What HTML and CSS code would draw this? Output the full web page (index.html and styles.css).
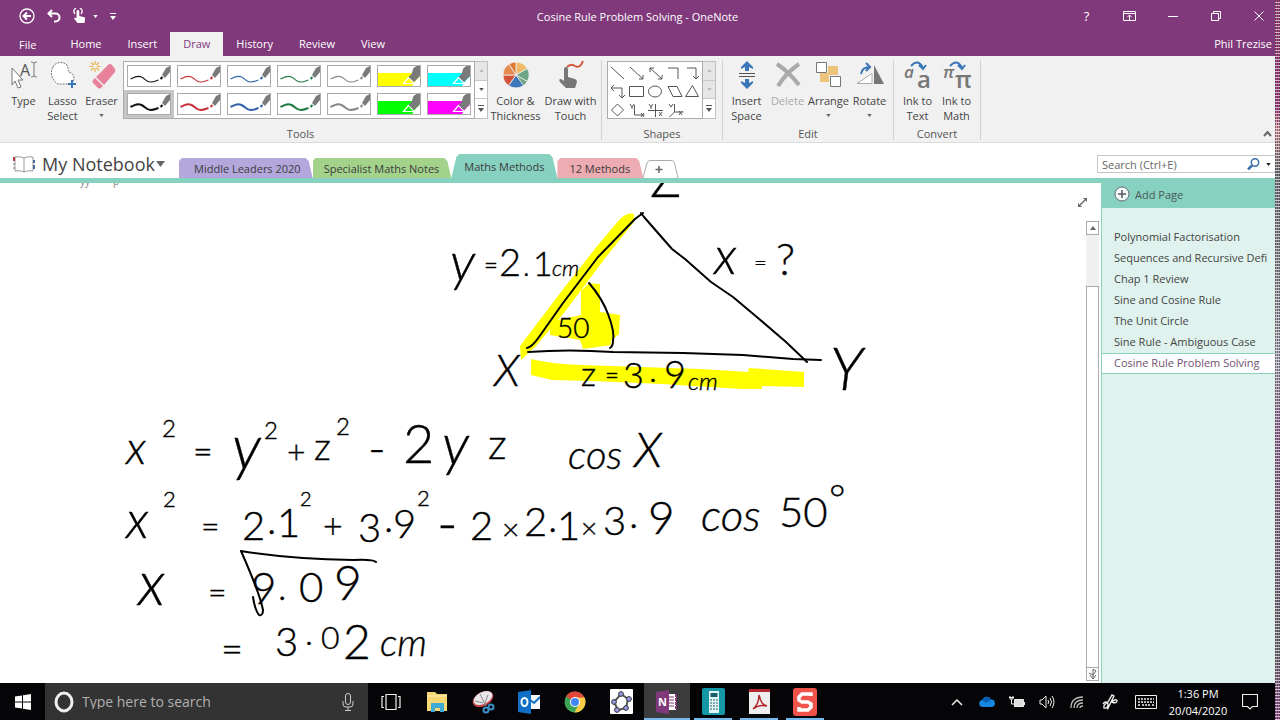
FILE: index.html
```html
<!DOCTYPE html>
<html lang="en">
<head>
<meta charset="utf-8">
<title>Cosine Rule Problem Solving - OneNote</title>
<link rel="stylesheet" href="styles.css">
</head>
<body>
<svg class="defs" aria-hidden="true">
  <symbol id="pen-thin" viewBox="0 0 42 20"><path d="M2.500 13c4-2 7-4 11-2s5 5 9 5 5-1 8-2" fill="none" stroke="currentColor" stroke-width="1.100"/><path d="M34 9l4-7 4-2v6l-5 6z" fill="#7a7a7a"/><path d="M32.500 13l2-2" stroke="currentColor" stroke-width="2"/></symbol>
  <symbol id="pen-thick" viewBox="0 0 42 20"><path d="M2.500 13c4-2 7-4 11-2s5 5 9 5 5-1 8-2" fill="none" stroke="currentColor" stroke-width="2"/><path d="M34 9l4-7 4-2v6l-5 6z" fill="#7a7a7a"/><path d="M32.500 13l2-2" stroke="currentColor" stroke-width="2"/></symbol>
  <symbol id="marker" viewBox="0 0 42 20"><path d="M0 7h36l6 4v9H0z" fill="currentColor"/><path d="M42 11v9h-8l5-7z" fill="#fff"/><path d="M25.500 17.500l5-6 6 6z" fill="none" stroke="#fff" stroke-width="1.200"/><path d="M30.500 11l3-3 2-6 3-2H42v10l-6 6z" fill="#7a7a7a"/></symbol>
  <symbol id="caret" viewBox="0 0 6 4"><path d="M0 0h6L3 4z" fill="currentColor"/></symbol>
  <symbol id="caret-up" viewBox="0 0 6 4"><path d="M0 4h6L3 0z" fill="currentColor"/></symbol>
  <symbol id="more" viewBox="0 0 6 7"><path d="M0 0h6v1H0zM0 3h6L3 7z" fill="currentColor"/></symbol>
</svg>
<div class="screen">
<div class="desktop">
  <header class="top">
    <div class="titlebar">
      <div class="quick">
        <button aria-label="Back"><svg width="16" height="16" viewBox="0 0 16 16" fill="none" stroke="currentColor"><circle cx="8" cy="8" r="7" stroke-width="1.300"/><path d="M12 8H5M8 4.500L4.500 8 8 11.500" stroke-width="2"/></svg></button>
        <button aria-label="Undo"><svg width="14" height="14" viewBox="0 0 14 14" fill="none" stroke="currentColor" stroke-width="2"><path d="M5 1L1.500 4.500 5 8M2 4.500h6.500a4 4 0 0 1 0 8H7"/></svg></button>
        <button aria-label="Touch mode" class="touch"><svg width="14" height="16" viewBox="0 0 14 16"><path d="M2 6a4 4 0 1 1 6 0" fill="none" stroke="currentColor" stroke-width="1.300"/><path d="M3.500 3.500a1.400 1.400 0 0 1 2.800 0V8l5 1.200q1 .4.800 1.500L11.500 15h-7L1 10.500l1-1 1.500 1z" fill="currentColor"/></svg><svg width="5" height="3"><use href="#caret"/></svg></button>
        <button aria-label="Customize toolbar"><svg width="6" height="7"><use href="#more"/></svg></button>
      </div>
      <h1>Cosine Rule Problem Solving - OneNote</h1>
      <div class="window-buttons">
        <button aria-label="Help" class="help">?</button>
        <button aria-label="Ribbon display"><svg width="13" height="10" viewBox="0 0 13 10" fill="none" stroke="currentColor"><path d="M.5.500h12v9H.5zM.5 2.500h12M6.500 9V4M4.500 6l2-2 2 2"/></svg></button>
        <button aria-label="Minimize"><svg width="10" height="10" viewBox="0 0 10 10" stroke="currentColor"><path d="M0 5.500h10"/></svg></button>
        <button aria-label="Restore"><svg width="10" height="10" viewBox="0 0 10 10" fill="none" stroke="currentColor"><path d="M.5 2.500h7v7h-7zM2.500 2.500v-2h7v7h-2"/></svg></button>
        <button aria-label="Close"><svg width="10" height="10" viewBox="0 0 10 10" stroke="currentColor"><path d="M.5.500l9 9M9.500.500l-9 9"/></svg></button>
      </div>
    </div>
    <nav class="menu">
      <button class="file">File</button><button>Home</button><button>Insert</button><button class="current">Draw</button><button>History</button><button>Review</button><button>View</button>
      <span class="user">Phil Trezise</span>
    </nav>
  </header>

  <section class="ribbon" aria-label="Draw">
    <div class="group tools">
      <div class="group-body">
        <button class="tool"><svg width="28" height="30" viewBox="0 0 28 30"><text x="10" y="16" class="type-letter">A</text><path d="M21 2q2 0 3 1 1-1 3-1M24 3v13M21 17q2 0 3-1 1 1 3 1" fill="none" stroke="#777"/><path d="M2 8l11 12H8l3 7-3 1-3-7-3 4z" fill="#fff" stroke="#777"/></svg><span>Type</span></button>
        <button class="tool"><svg width="28" height="30" viewBox="0 0 28 30"><path d="M4 7c2-5 10-6 14-2 2 4 0 7 4 8 5 3 3 9 0 11H9C4 21 0 14 4 7z" fill="#fff" stroke="#777" stroke-dasharray="2 1"/><path d="M23 20v8M19 24h8" stroke="#3a76b8" stroke-width="2"/></svg><span>Lasso<br>Select</span></button>
        <button class="tool"><svg width="28" height="30" viewBox="0 0 28 30"><path d="M7 1v11M1.500 6.500h11M3 2.500l8 8M11 2.500l-8 8" stroke="#eeb14a" stroke-width="1.200"/><circle cx="7" cy="6.500" r="2" fill="#f1f1f1"/><path d="M20 5q2-2 4 0l3 4q1 2 0 3L16 25l-8-8z" fill="#e8819a"/><path d="M7 18l8 8-2 2q-2 1-3 0l-5-5q-1-2 0-3z" fill="#e8819a"/></svg><span>Eraser</span><svg class="drop" width="5" height="3"><use href="#caret"/></svg></button>
        <div class="gallery pens">
          <button class="swatch black" aria-label="Black thin pen"><svg><use href="#pen-thin"/></svg></button>
          <button class="swatch red" aria-label="Red thin pen"><svg><use href="#pen-thin"/></svg></button>
          <button class="swatch blue" aria-label="Blue thin pen"><svg><use href="#pen-thin"/></svg></button>
          <button class="swatch green" aria-label="Green thin pen"><svg><use href="#pen-thin"/></svg></button>
          <button class="swatch gray" aria-label="Gray thin pen"><svg><use href="#pen-thin"/></svg></button>
          <button class="swatch yellow" aria-label="Yellow highlighter"><svg><use href="#marker"/></svg></button>
          <button class="swatch cyan" aria-label="Cyan highlighter"><svg><use href="#marker"/></svg></button>
          <button class="swatch black chosen" aria-label="Black pen"><svg><use href="#pen-thick"/></svg></button>
          <button class="swatch red" aria-label="Red pen"><svg><use href="#pen-thick"/></svg></button>
          <button class="swatch blue" aria-label="Blue pen"><svg><use href="#pen-thick"/></svg></button>
          <button class="swatch green" aria-label="Green pen"><svg><use href="#pen-thick"/></svg></button>
          <button class="swatch gray" aria-label="Gray pen"><svg><use href="#pen-thick"/></svg></button>
          <button class="swatch lime" aria-label="Green highlighter"><svg><use href="#marker"/></svg></button>
          <button class="swatch magenta" aria-label="Magenta highlighter"><svg><use href="#marker"/></svg></button>
        </div>
        <div class="gallery-scroll">
          <button aria-label="Previous pens" disabled><svg width="5" height="3"><use href="#caret-up"/></svg></button>
          <button aria-label="Next pens"><svg width="5" height="3"><use href="#caret"/></svg></button>
          <button aria-label="More pens"><svg width="6" height="7"><use href="#more"/></svg></button>
        </div>
        <button class="tool wide"><svg width="28" height="30" viewBox="-14 -15 28 30" stroke="#f1f1f1" stroke-width=".8"><path d="M0 0V-13A13 13 0 0 1 11.300-6.500z" fill="#f0bb68"/><path d="M0 0l11.300-6.500A13 13 0 0 1 11.300 6.500z" fill="#6fa486"/><path d="M0 0l11.300 6.500A13 13 0 0 1 6.500 11.300z" fill="#6fa486"/><path d="M0 0l7.500 10.600A13 13 0 0 1-7.500 10.600z" fill="#3f77ba"/><path d="M0 0l-7.500 10.600A13 13 0 0 1-13 0z" fill="#d5523a"/><path d="M0 0h-13A13 13 0 0 1-7-11z" fill="#e58a4e"/><path d="M0 0l-7-11A13 13 0 0 1 0-13z" fill="#df7b35"/></svg><span>Color &amp;<br>Thickness</span></button>
        <button class="tool wide"><svg width="28" height="30" viewBox="0 0 28 30"><path d="M10 7q4-4 8-1 5 3 8-5" fill="none" stroke="#d5523a" stroke-width="2"/><path d="M7 9q0-2 2-2t2 2v8l7 2q2 1 2 3l-2 6H9l-6-6q-2-3 1-3l3 2z" fill="#777"/></svg><span>Draw with<br>Touch</span></button>
      </div>
      <h2>Tools</h2>
    </div>
    <div class="group shapes">
      <div class="group-body">
        <button class="gallery shape-grid" aria-label="Shapes"><svg width="94" height="55" viewBox="0 0 94 55" fill="none" stroke="#555"><path d="M3 4l13 12M22 4l13 12M31 16h4v-4M42 5l12 11M42 9V5h4M50 16h4v-4M60 5h10v11M79 5h9v11M85 13l3 3 3-3"/><path d="M3 25h11v10M6 22l-3 3 3 3M11 32l3 3 3-3M21.500 23.500h14v10h-14zM60 23.500h9l5 10h-9zM84.500 22.500l6 11h-13z"/><ellipse cx="47" cy="28.500" rx="6.500" ry="5.500"/><path d="M9.500 41l6 6-6 6-6-6zM26.500 42v10h10M40 47.500h15M47.500 41v13M66.500 41v8h9M66.500 49l-5 5"/><path d="M22 41l2 3 2-3M24 44v2M41 41l2 3 2-3M43 44v2M61 41l2 3 2-3M33 50l3 4M36 50l-3 4M51 49l3 4M54 49l-3 4M71 48l3 4M74 48l-3 4"/></svg></button>
        <div class="gallery-scroll">
          <button aria-label="Previous shapes" disabled><svg width="5" height="3"><use href="#caret-up"/></svg></button>
          <button aria-label="Next shapes" disabled><svg width="5" height="3"><use href="#caret"/></svg></button>
          <button aria-label="More shapes"><svg width="6" height="7"><use href="#more"/></svg></button>
        </div>
      </div>
      <h2>Shapes</h2>
    </div>
    <div class="group edit">
      <div class="group-body">
        <button class="tool"><svg width="28" height="30" viewBox="0 0 28 30"><path d="M6 13.500h16M6 16.500h16" stroke="#555"/><path d="M14 1l6 6v2l-4-2v4h-4V7L8 9V7zM14 29l6-6v-2l-4 2v-4h-4v4l-4-2v2z" fill="#3a76b8"/></svg><span>Insert<br>Space</span></button>
        <button class="tool" disabled><svg width="28" height="30" viewBox="0 0 28 30"><path d="M3 4q12 8 22 21M25 4Q12 13 4 26" fill="none" stroke="#aaa" stroke-width="4"/></svg><span>Delete</span></button>
        <button class="tool"><svg width="28" height="30" viewBox="0 0 28 30"><path d="M13 6h10v9H13zM5 13h9v9H5z" fill="#eec47c"/><path d="M1.500 2.500h10v10h-10zM15.500 16.500h10v10h-10z" fill="#fff" stroke="#777"/></svg><span>Arrange</span><svg class="drop" width="5" height="3"><use href="#caret"/></svg></button>
        <button class="tool"><svg width="28" height="30" viewBox="0 0 28 30"><path d="M1 23.500l15-10v10z" fill="#fff" stroke="#aaa"/><path d="M18 5l10 19H18z" fill="#777"/><path d="M5 14q1-7 9-7M10 3l4 4-4 4" fill="none" stroke="#3a76b8" stroke-width="2"/></svg><span>Rotate</span><svg class="drop" width="5" height="3"><use href="#caret"/></svg></button>
      </div>
      <h2>Edit</h2>
    </div>
    <div class="group convert">
      <div class="group-body">
        <button class="tool"><svg width="30" height="30" viewBox="0 0 30 30"><text x="1" y="18" class="ink-from">a</text><text x="14" y="28" class="ink-to">a</text><path d="M8 6q7-8 12 2M16 5l4 4 3-4" fill="none" stroke="#3a76b8" stroke-width="2"/></svg><span>Ink to<br>Text</span></button>
        <button class="tool"><svg width="30" height="30" viewBox="0 0 30 30"><text x="1" y="18" class="ink-from">π</text><text x="13" y="28" class="ink-to">π</text><path d="M8 6q7-8 12 2M16 5l4 4 3-4" fill="none" stroke="#3a76b8" stroke-width="2"/></svg><span>Ink to<br>Math</span></button>
      </div>
      <h2>Convert</h2>
    </div>
    <button class="collapse" aria-label="Collapse ribbon"><svg width="9" height="6" viewBox="0 0 9 6"><path d="M1 5l3.500-4L8 5" fill="none" stroke="#666" stroke-width="2"/></svg></button>
  </section>

  <nav class="notebook">
    <button class="book"><svg width="22" height="18" viewBox="0 0 22 18" fill="none"><path d="M11 3q-4-2-9-1v14q5-1 9 1 4-2 9-1V2q-5-1-9 1v14" stroke="#999"/><path d="M1 2v4" stroke="#b43a3a" stroke-width="2"/><path d="M21 5v3M21 10v4" stroke="#456a9a" stroke-width="2"/><path d="M1 8v8" stroke="#777" stroke-dasharray="2 2"/></svg><span>My Notebook</span><svg width="9" height="6" viewBox="0 0 6 4"><use href="#caret"/></svg></button>
    <div class="sections">
      <button class="section lilac">Middle Leaders 2020</button>
      <button class="section lime-tab">Specialist Maths Notes</button>
      <button class="section open">Maths Methods</button>
      <button class="section pink">12 Methods</button>
      <button class="new-section" aria-label="New section"><svg width="36" height="18" viewBox="0 0 36 18" fill="none"><path d="M0 18L4 3q1-2.500 3-2.500h21q3 0 3.500 2.500L35 18" stroke="#aaa"/><path d="M16 6v7M12.500 9.500h7" stroke="#666" stroke-width="1.500"/></svg></button>
    </div>
    <div class="search">
      <input type="text" aria-label="Search" placeholder="Search (Ctrl+E)">
      <svg width="13" height="12" viewBox="0 0 13 12" fill="none" stroke="#3a6ea8"><circle cx="8" cy="4.500" r="3.700" stroke-width="1.500"/><path d="M5 7.500l-4 4" stroke-width="2.500"/></svg>
      <svg width="5" height="3"><use href="#caret"/></svg>
    </div>
  </nav>

  <main class="workspace">
    <div class="canvas">
      <svg class="ink" role="img" aria-label="Cosine rule worked example">
        <g transform="translate(0 -183)">
          <g fill="#ff0">
            <path d="M520 346l44-58 34-43 22-26q8-7 14-5v8l-28 35-42 56-29 34-14 13z"/>
            <path d="M581 291l8-8 11 1v28l20 3-1 19-8 7v4l-28 4-3-9-30-5v-9l8-6 23-5z"/>
            <path d="M531 359q20 5 50 6l60 2 60 2 47 3 1-4 55 4v15l-42-1v3h-20l-80-5-70-3-40-1-21-5z"/>
          </g>
          <g class="strokes">
            <path d="M527 348q5-1 12-11l24-34 35-46 37-38 8-6"/>
            <path d="M641 213l3 4 28 32 13 10 26 23 22 15 25 21 28 24 21 20"/>
            <path d="M528 352q40-3 85 0l70 1 60 2 50 4 28 1"/>
            <path d="M589 283q13 15 19 31 7 18 5 27 0 5-3 7"/>
            <path d="M253 597q2 13 6 18 4 1 4-5-3-16-22-59 50 8 112 9 20-1 23 2"/>
          </g>
          <g class="letters">
            <text x="650" y="197" font-size="52">Z</text>
            <text y="275" font-size="28"><tspan x="450" y="281" font-size="54" class="v">y</tspan><tspan x="484" y="274" font-size="24">=</tspan><tspan x="499" y="276" font-size="38">2</tspan><tspan x="523">.</tspan><tspan x="533" font-size="34">1</tspan><tspan x="552" font-size="22" class="v">cm</tspan></text>
            <text y="274" font-size="32"><tspan x="714" class="v" font-size="52">x</tspan><tspan x="754" y="270" font-size="22">=</tspan><tspan x="776" y="275" font-size="44">?</tspan></text>
            <text x="557" y="338" font-size="28">50</text>
            <text x="494" y="386" font-size="44" class="v">X</text>
            <text x="830" y="390" font-size="60" class="v">Y</text>
            <text y="386" font-size="34"><tspan x="581">z</tspan><tspan x="605" y="384" font-size="24">=</tspan><tspan x="623" y="388" font-size="36">3</tspan><tspan x="649" y="382">.</tspan><tspan x="664" y="388" font-size="38">9</tspan><tspan x="688" y="390" font-size="24" class="v">cm</tspan></text>

            <text y="464"><tspan x="126" class="v" font-size="46">x</tspan><tspan x="162" y="437" font-size="24">2</tspan><tspan x="193" y="463" font-size="34">=</tspan><tspan x="232" y="469" font-size="62" class="v">y</tspan><tspan x="264" y="439" font-size="24">2</tspan><tspan x="287" y="463" font-size="32">+</tspan><tspan x="314" y="460" font-size="38">z</tspan><tspan x="336" y="435" font-size="24">2</tspan><tspan x="368" y="465" font-size="48">-</tspan><tspan x="403" y="463" font-size="54">2</tspan><tspan x="442" y="465" font-size="58" class="v">y</tspan><tspan x="488" y="459" font-size="42">z</tspan><tspan x="568" y="469" font-size="40" class="v">cos</tspan><tspan x="634" y="467" font-size="48" class="v">X</tspan></text>

            <text y="539" font-size="40"><tspan x="126" y="538" font-size="52" class="v">x</tspan><tspan x="163" y="507" font-size="22">2</tspan><tspan x="201" y="538" font-size="32">=</tspan><tspan x="242" y="540">2</tspan><tspan x="267" y="534">.</tspan><tspan x="277" y="537">1</tspan><tspan x="300" y="506" font-size="20">2</tspan><tspan x="323" y="538" font-size="34">+</tspan><tspan x="358" y="542">3</tspan><tspan x="384" y="532">.</tspan><tspan x="393" y="538">9</tspan><tspan x="417" y="506" font-size="22">2</tspan><tspan x="437" y="543" font-size="56">-</tspan><tspan x="470" y="540">2</tspan><tspan x="502" y="540" font-size="30">×</tspan><tspan x="524" y="536">2</tspan><tspan x="548" y="532">.</tspan><tspan x="557" y="540">1</tspan><tspan x="581" y="538" font-size="28">×</tspan><tspan x="603" y="535">3</tspan><tspan x="629" y="528">.</tspan><tspan x="648" y="534" font-size="46">9</tspan><tspan x="701" y="531" font-size="44" class="v">cos</tspan><tspan x="779" y="527" font-size="42">50</tspan><tspan x="829" y="513" font-size="40">°</tspan></text>

            <text y="605" font-size="44"><tspan x="138" font-size="62" class="v">x</tspan><tspan x="208" y="604" font-size="32">=</tspan><tspan x="251" y="604" font-size="44">9</tspan><tspan x="278" y="600" font-size="36">.</tspan><tspan x="299" y="602" font-size="42">0</tspan><tspan x="334" y="600" font-size="48">9</tspan></text>
            <text y="656" font-size="40"><tspan x="221" y="662" font-size="38">=</tspan><tspan x="275" y="656" font-size="40">3</tspan><tspan x="305" y="645" font-size="34">.</tspan><tspan x="321" y="649" font-size="32">0</tspan><tspan x="343" y="659" font-size="48">2</tspan><tspan x="380" y="656" font-size="38" class="v">cm</tspan></text>
          </g>
          <text x="80" y="185" class="stamp">yy</text><text x="113" y="185" class="stamp">p</text>
        </g>
      </svg>
      <div class="rail">
        <button class="expand" aria-label="Full page view"><svg width="11" height="11" viewBox="0 0 11 11"><path d="M3 8l5-5" stroke="#666" stroke-width="1.500"/><path d="M6 1h4v4zM1 6v4h4z" fill="#666"/></svg></button>
        <div class="scrollbar">
          <button aria-label="Scroll up"><svg width="6" height="4"><use href="#caret-up"/></svg></button>
          <div class="track"><div class="thumb"></div></div>
          <button aria-label="Scroll down"><svg width="9" height="11" viewBox="0 0 9 11" fill="none" stroke="#666"><path d="M5 0v9M2 6l3 4 3-4M1 4l4 2 3-4-3-2"/></svg></button>
        </div>
      </div>
    </div>
    <aside class="pages">
      <button class="add"><svg width="16" height="16" viewBox="0 0 16 16" fill="none"><circle cx="8" cy="8" r="7" fill="#f4fbf9" stroke="#667"/><path d="M8 4v8M4 8h8" stroke="#556" stroke-width="1.500"/></svg><span>Add Page</span></button>
      <ul>
        <li><a href="#p1">Polynomial Factorisation</a></li>
        <li><a href="#p2">Sequences and Recursive Defi</a></li>
        <li><a href="#p3">Chap 1 Review</a></li>
        <li><a href="#p4">Sine and Cosine Rule</a></li>
        <li><a href="#p5">The Unit Circle</a></li>
        <li><a href="#p6">Sine Rule - Ambiguous Case</a></li>
        <li class="active"><a href="#p7">Cosine Rule Problem Solving</a></li>
      </ul>
    </aside>
  </main>

  <footer class="taskbar">
    <button class="start" aria-label="Start"><svg width="16" height="16" viewBox="0 0 16 16" fill="#fff"><path d="M0 2.500L7 1.500v6H0zM8 1.300L16 0v7.500H8zM0 8.500h7v6L0 13.500zM8 8.500h8V16l-8-1.200z"/></svg></button>
    <div class="find">
      <svg width="20" height="22" viewBox="0 0 20 22"><ellipse cx="10" cy="11" rx="8" ry="9" fill="none" stroke="#eee" stroke-width="3"/></svg>
      <input type="text" aria-label="Windows search" placeholder="Type here to search">
      <svg width="12" height="18" viewBox="0 0 12 18" fill="none" stroke="#ccc"><rect x="3.500" y=".5" width="5" height="11" rx="2.500"/><path d="M1 8v3q0 3 3 3h4q3 0 3-3V8M6 14v3M3 17.500h6"/></svg>
    </div>
    <button class="app" aria-label="Task view"><svg width="20" height="18" viewBox="0 0 20 18" fill="none" stroke="#eee"><path d="M5 1.500h10v15H5zM3 3.500H1v11h2M17 3.500h2v11h-2" stroke-width="1.200"/></svg></button>
    <button class="app" aria-label="File Explorer"><svg width="22" height="22" viewBox="0 0 22 22"><path d="M1 1h8l2 2h10v17H1z" fill="#f7d774"/><path d="M1 5h20" stroke="#fff0b5"/><path d="M5 12h13v9h-4v-4H9v4H5z" fill="#3fa9d8"/></svg></button>
    <button class="app" aria-label="Snipping Tool"><svg width="24" height="24" viewBox="0 0 24 24"><ellipse cx="12" cy="9" rx="11" ry="7" transform="rotate(-28 12 9)" fill="#c9474b"/><ellipse cx="12" cy="8" rx="10" ry="6" transform="rotate(-28 12 8)" fill="#e9e6e9"/><path d="M9 4l6 12M17 5l-4 10M4 11l8 2" stroke="#888" fill="none"/><g fill="none" stroke="#3d91c9" stroke-width="2"><circle cx="15" cy="20" r="2.500"/><circle cx="20" cy="17" r="2.500"/></g></svg></button>
    <button class="app" aria-label="Outlook"><svg width="22" height="24" viewBox="0 0 22 24"><path d="M10 5h12v14H10z" fill="#f4f8fc"/><path d="M11 9l5 4 6-6" fill="none" stroke="#0f6fc5" stroke-width="2"/><path d="M0 2l13-2v24L0 22z" fill="#0f6fc5"/><ellipse cx="6.500" cy="12" rx="3" ry="4" fill="none" stroke="#fff" stroke-width="2"/></svg></button>
    <button class="app" aria-label="Chrome"><svg width="22" height="22" viewBox="0 0 22 22"><circle cx="11" cy="11" r="10.500" fill="#3ca455"/><path d="M11 11L2 5.500a10.500 10.500 0 0 1 18.400 1z" fill="#e0473a"/><path d="M11 6.500h9.500A10.500 10.500 0 0 1 10.500 21.500L15 13z" fill="#fbcb43"/><circle cx="11" cy="11" r="5" fill="#fff"/><circle cx="11" cy="11" r="4" fill="#4285f4"/></svg></button>
    <button class="app" aria-label="GeoGebra"><svg width="23" height="25" viewBox="0 0 23 25"><rect width="23" height="25" rx="1" fill="#fff"/><path d="M11 5l7 5-2 9-8 2-4-8z" fill="none" stroke="#555" stroke-width="2"/><g fill="#9999e8" stroke="#333"><circle cx="11" cy="5" r="2.400"/><circle cx="19" cy="10" r="2.400"/><circle cx="16" cy="19" r="2.400"/><circle cx="7" cy="21" r="2.400"/><circle cx="4" cy="13" r="2.400"/></g></svg></button>
    <button class="app running focused" aria-label="OneNote"><svg width="22" height="24" viewBox="0 0 22 24"><path d="M11 4h9v16h-9z" fill="#fff"/><path d="M13 7h5M13 10h5M13 13h5M13 16h5" stroke="#80397b"/><path d="M20 4v16" stroke="#80397b" stroke-width="2" stroke-dasharray="3 1"/><path d="M0 2l13-2v24L0 22z" fill="#80397b"/><text x="2" y="16" class="logo-letter">N</text></svg></button>
    <button class="app running" aria-label="Calculator"><svg width="23" height="27" viewBox="0 0 23 27"><rect width="23" height="27" rx="2" fill="#1498a5"/><path d="M7 3h10v22H7z" fill="#e6f5f6"/><path d="M8.500 5h7v4h-7z" fill="#17606c"/><path d="M8 12h8M8 15h8M8 18h8M8 21h8" stroke="#17606c" stroke-dasharray="2 1"/></svg></button>
    <button class="app running" aria-label="Acrobat Reader"><svg width="21" height="25" viewBox="0 0 21 25"><path d="M0 0h21v25H0z" fill="#eee"/><path d="M0 0h21v3H0z" fill="#b2262c"/><path d="M4 20q6-5 6-14c2 8 4 10 8 11q-8-2-14 3z" fill="none" stroke="#b2262c" stroke-width="1.500"/></svg></button>
    <button class="app running" aria-label="Snagit"><svg width="24" height="28" viewBox="0 0 24 28"><rect width="24" height="28" rx="3" fill="#f0534b"/><path d="M18 8V6H9L6 9v3l3 2h6l3 2v3l-3 3H6v-3" fill="none" stroke="#fff" stroke-width="3.500"/></svg></button>
    <div class="tray">
      <button class="tray-item" aria-label="Show hidden icons"><svg width="12" height="8" viewBox="0 0 12 8" fill="none" stroke="#eee"><path d="M1 7l5-5 5 5" stroke-width="1.500"/></svg></button>
      <button class="tray-item" aria-label="OneDrive"><svg width="16" height="12" viewBox="0 0 16 12"><path d="M4 11a3.500 3.500 0 0 1-.5-7A4.500 4.500 0 0 1 12 3.500 3.800 3.800 0 0 1 13 11z" fill="#1687e0"/><path d="M3.500 4A4.500 4.500 0 0 1 12 3.500L7 7z" fill="#0a60b0"/></svg></button>
      <button class="tray-item" aria-label="Battery"><svg width="16" height="14" viewBox="0 0 16 14" fill="none" stroke="#eee"><path d="M5.500 4.500h9v7h-9z" fill="#ddd"/><path d="M15.500 7v3M1 1v3h3V1M2.500 4v5h3M0 2.500h5"/></svg></button>
      <button class="tray-item" aria-label="Volume"><svg width="16" height="14" viewBox="0 0 16 14" fill="none" stroke="#eee"><path d="M1 5h2l4-4v12L3 9H1zM9 5q1.500 2 0 4M11 3q3 4 0 8M13 1q4 6 0 12"/></svg></button>
      <button class="tray-item" aria-label="Wi-Fi"><svg width="14" height="14" viewBox="0 0 14 14" fill="none" stroke="#bbb" stroke-width="1.300"><path d="M1 13Q1 2 13 2M4 13q0-8 9-8M7 13q0-5 6-5M10 13q0-2 3-2"/></svg></button>
      <button class="tray-item roomy" aria-label="Windows Ink"><svg width="16" height="16" viewBox="0 0 16 16" fill="none" stroke="#eee" stroke-width="1.400"><path d="M1 10q3-4 5 0 0 5-4 4-1-3 4-6l4-7 2 1-5 10q-1 3-2 3M9 8q6-4 6-1-1 3-5 1"/></svg></button>
      <button class="tray-item roomy" aria-label="Touch keyboard"><svg width="22" height="14" viewBox="0 0 22 14" fill="none" stroke="#eee"><path d="M.5.500h21v13H.5z"/><path d="M3 4h16M3 7h16M3 10h2M7 10h9M17 10h2" stroke-dasharray="2 1" stroke-width="1.500"/></svg></button>
      <div class="clock"><span>1:36 PM</span><span>20/04/2020</span></div>
      <button class="tray-item roomy" aria-label="Notifications"><svg width="16" height="16" viewBox="0 0 16 16" fill="none" stroke="#eee"><path d="M.5.500h15v12h-5L8 15l-2.500-2.500h-5z" stroke-width="1.200"/></svg></button>
    </div>
  </footer>
</div>
<div class="edge"></div>
</div>
</body>
</html>
```
FILE: styles.css
```css
* { box-sizing: border-box; }
body { margin: 0; font: 11px/15px "Open Sans", "Noto Sans", sans-serif; color: #444; background: #fff; }
button { margin: 0; padding: 0; border: 0; background: none; color: inherit; font: inherit; }
h1, h2, ul { margin: 0; padding: 0; font: inherit; list-style: none; }
svg { display: block; flex: none; }
.defs { position: absolute; width: 0; height: 0; }

.screen { display: flex; height: 100vh; }
.desktop { flex: 1; min-width: 0; display: flex; flex-direction: column; }
.edge {
  width: 5px;
  background:
    repeating-linear-gradient(0deg, rgba(255,255,255,.65) 0 1px, transparent 1px 3px),
    repeating-linear-gradient(90deg, rgba(40,40,60,.5) 0 1px, transparent 1px 2px),
    linear-gradient(#a8407c 0 15%, #e8a0a0 18%, #777 24%, #b0b0b8 50%, #a07098 60%, #777 90%, #a05090);
}

.top { background: #80397b; color: #fff; }
.titlebar { display: grid; grid-template-columns: 1fr auto 1fr; align-items: center; height: 32px; }
.quick { display: flex; align-items: center; gap: 12px; padding: 0 19px; height: 28px; }
.touch { display: flex; align-items: center; gap: 6px; }
.window-buttons { display: flex; justify-content: flex-end; height: 28px; }
.window-buttons button { width: 43px; display: flex; align-items: center; justify-content: center; }
.window-buttons .help { font-size: 13px; }
.window-buttons button:last-child { margin-right: -5px; }
.menu { display: flex; height: 24px; }
.menu button { padding: 0 13px 1px; }
.menu .file { padding: 0 21px 0 19px; }
.menu .current { background: #f1f1f1; color: #80397b; }
.user { margin-left: auto; padding: 4px 3px; }

.ribbon { display: flex; background: #f1f1f1; border-bottom: 1px solid #dcdcdc; height: 87px; padding-top: 4px; }
.group { display: flex; flex-direction: column; border-right: 1px solid #d2d2d2; margin-bottom: 2px; }
.group-body { display: flex; height: 67px; }
.group h2 { text-align: center; color: #555; line-height: 13px; }
.tools .group-body { padding: 0 3px 0 4px; }
.tool { display: flex; flex-direction: column; align-items: center; width: 39px; white-space: nowrap; }
.tool span { margin-top: 3px; }
.tool:disabled { color: #aaa; }
.tool .drop { margin-top: 6px; color: #666; }
.tool.wide { width: 55px; }
.edit .group-body { padding: 0 3px; }
.edit .tool { width: 41px; }
.convert .group-body { padding: 0 4px; }
.tool svg { overflow: visible; }
.type-letter { font: 16px "Open Sans", sans-serif; fill: #555; }
.ink-from { font: italic 600 17px "Open Sans", sans-serif; fill: #777; }
.ink-to { font: 600 24px "Open Sans", sans-serif; fill: #777; }

.gallery { background: #fff; border: 1px solid #ababab; height: 58px; margin-top: 1px; }
.pens { display: grid; grid-template-columns: repeat(7, 50px); grid-template-rows: 28px 28px; margin-left: 2px; }
.swatch { display: flex; align-items: center; justify-content: center; }
.swatch svg { width: 44px; height: 22px; background: #fff; border: 1px solid #ababab; }
.chosen { background: #c6c6c6; }
.black { color: #111; }
.red { color: #c8323c; }
.blue { color: #3262a8; }
.green { color: #1f7a44; }
.gray { color: #888; }
.yellow { color: #ff0; }
.cyan { color: #0ff; }
.lime { color: #0f0; }
.magenta { color: #f0f; }
.gallery-scroll { display: grid; grid-template-rows: repeat(3, 1fr); width: 13px; height: 58px; margin-top: 1px; border: 1px solid #c0c0c0; border-left: 0; }
.gallery-scroll button { display: flex; align-items: center; justify-content: center; border-bottom: 1px solid #c8c8c8; color: #555; background: #fff; }
.gallery-scroll button:last-child { border-bottom: 0; }
.gallery-scroll button:disabled { background: #e6e6e6; color: #bbb; }
.shapes .group-body { padding: 0 6px 0 5px; }
.shape-grid { width: 96px; }
.collapse { margin: auto 3px 5px auto; }

.notebook { display: flex; height: 35px; align-items: flex-end; }
.book { display: flex; align-items: center; gap: 7px; width: 179px; padding: 7px 0 0 13px; height: 35px; font-size: 18px; }
.book span { margin-right: -6px; }
.book svg:last-child { color: #666; }
.sections { display: flex; align-items: flex-end; flex: 1; color: #3c3c3c; }
.section { height: 20px; padding: 0 12px 0 15px; clip-path: polygon(0 3px, 3px 0, calc(100% - 7px) 0, calc(100% - 4px) 3px, 100% 100%, 0 100%); }
.lilac { background: #b4a7dc; }
.lime-tab { background: #a3d38b; padding: 0 12px 0 11px; }
.open { height: 24px; padding: 0 13px; background: #86d1c0; clip-path: polygon(0 100%, 5px 3px, 8px 0, calc(100% - 8px) 0, calc(100% - 5px) 3px, 100% 100%); }
.pink { background: #edabb2; padding: 0 13px 0 12px; }
.search { display: flex; align-items: center; gap: 6px; width: 178px; height: 18px; margin-bottom: 5px; padding: 0 4px; border: 1px solid #c6c6c6; border-right: 0; color: #222; }
input { min-width: 0; flex: 1; border: 0; padding: 0; background: none; font: inherit; outline: 0; }
input::placeholder { color: #666; opacity: 1; }

.workspace { flex: 1; min-height: 0; display: flex; border-top: 5px solid #86d1c0; }
.canvas { flex: 1; min-width: 0; display: flex; }
.ink { flex: 1; min-width: 0; height: 100%; overflow: hidden; }
.strokes { fill: none; stroke: #000; stroke-width: 2; stroke-linecap: round; stroke-linejoin: round; }
.letters { font-family: Lato, "Open Sans", sans-serif; font-weight: 300; fill: #000; stroke: #000; stroke-width: .4px; }
.v { font-style: italic; }
.stamp { font-size: 10px; fill: #888; }
.rail { width: 15px; display: flex; flex-direction: column; align-items: flex-start; }
.expand { height: 38px; margin-left: -9px; }
.scrollbar { flex: 1; width: 13px; display: flex; flex-direction: column; margin-bottom: 2px; }
.scrollbar button { height: 14px; border: 1px solid #aaa; display: flex; align-items: center; justify-content: center; color: #666; }
.track { flex: 1; display: flex; background: #f0f0f0; padding-top: 51px; }
.thumb { flex: 1; background: #fff; border: 1px solid #aaa; border-bottom: 0; }

.pages { width: 174px; background: #dff2ee; border-left: 1px solid #86d1c0; }
.add { display: flex; align-items: center; gap: 5px; width: 100%; height: 25px; padding: 0 12px 3px; background: #86d1c0; color: #4a5a58; }
.pages ul { padding-top: 19px; }
.pages li { height: 21px; padding: 2px 0 0 12px; overflow: hidden; white-space: nowrap; }
.pages a { color: #444; text-decoration: none; }
.pages .active { background: #fff; border: solid #86d1c0; border-width: 1px 0; padding-top: 1px; }
.pages .active a { color: #705070; }

.taskbar { display: flex; height: 37px; background: #050507; color: #fff; }
.start { width: 45px; display: flex; align-items: center; justify-content: center; }
.find { display: flex; align-items: center; gap: 8px; width: 323px; padding: 0 14px 0 9px; background: #333; font-size: 14px; }
.find input { color: #ddd; }
.find input::placeholder { color: #b0b0b0; }
.app { width: 46px; display: flex; align-items: center; justify-content: center; }
.running { background: linear-gradient(#76b9ed, #76b9ed) 50% 100% / 38px 2px no-repeat; }
.focused { background-color: #3c3c3c; background-size: 46px 2px; }
.logo-letter { font: bold 11px "Open Sans", sans-serif; fill: #fff; }
.tray { display: flex; margin-left: auto; padding-right: 7px; }
.tray-item { width: 30px; display: flex; align-items: center; justify-content: center; }
.roomy { width: 36px; }
.clock { width: 68px; display: flex; flex-direction: column; align-items: center; justify-content: center; line-height: 17px; }
```
